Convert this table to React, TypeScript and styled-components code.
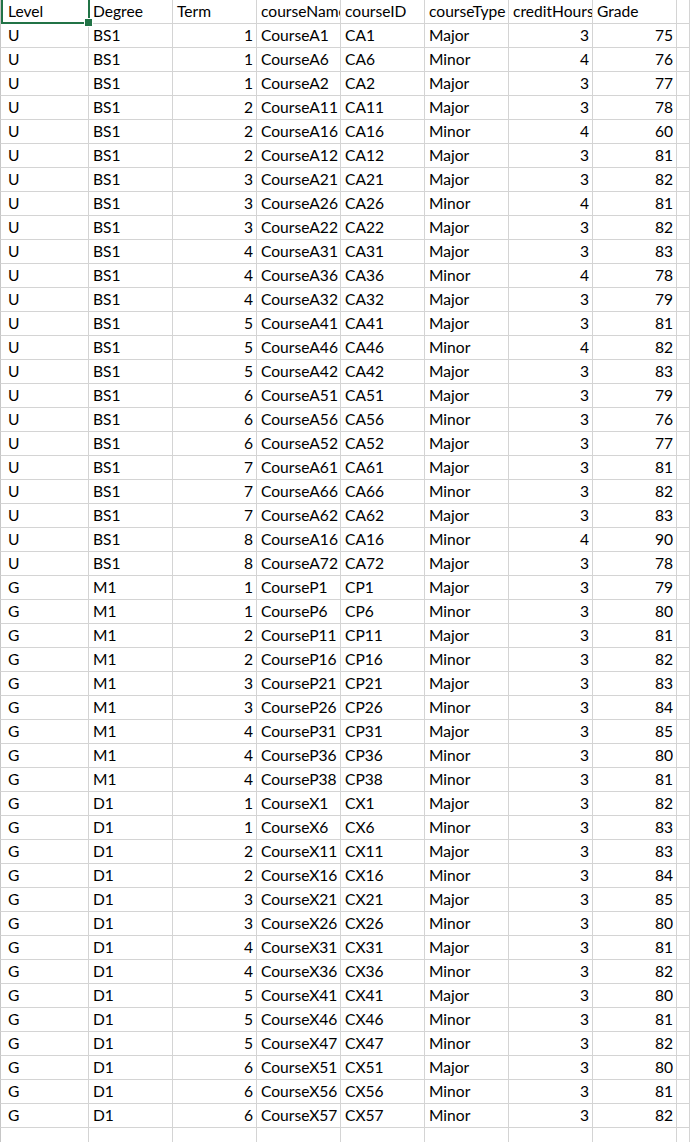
import React from 'react';
import styled, { createGlobalStyle } from 'styled-components';

const GlobalStyle = createGlobalStyle`
  html, body {
    margin: 0;
    padding: 0;
    background: #ffffff;
    overflow: hidden;
  }
`;

type Row = [string, string, number, string, string, string, number, number];

const headers = ['Level', 'Degree', 'Term', 'courseName', 'courseID', 'courseType', 'creditHours', 'Grade'];

const rows: Row[] = [
  ['U', 'BS1', 1, 'CourseA1', 'CA1', 'Major', 3, 75],
  ['U', 'BS1', 1, 'CourseA6', 'CA6', 'Minor', 4, 76],
  ['U', 'BS1', 1, 'CourseA2', 'CA2', 'Major', 3, 77],
  ['U', 'BS1', 2, 'CourseA11', 'CA11', 'Major', 3, 78],
  ['U', 'BS1', 2, 'CourseA16', 'CA16', 'Minor', 4, 60],
  ['U', 'BS1', 2, 'CourseA12', 'CA12', 'Major', 3, 81],
  ['U', 'BS1', 3, 'CourseA21', 'CA21', 'Major', 3, 82],
  ['U', 'BS1', 3, 'CourseA26', 'CA26', 'Minor', 4, 81],
  ['U', 'BS1', 3, 'CourseA22', 'CA22', 'Major', 3, 82],
  ['U', 'BS1', 4, 'CourseA31', 'CA31', 'Major', 3, 83],
  ['U', 'BS1', 4, 'CourseA36', 'CA36', 'Minor', 4, 78],
  ['U', 'BS1', 4, 'CourseA32', 'CA32', 'Major', 3, 79],
  ['U', 'BS1', 5, 'CourseA41', 'CA41', 'Major', 3, 81],
  ['U', 'BS1', 5, 'CourseA46', 'CA46', 'Minor', 4, 82],
  ['U', 'BS1', 5, 'CourseA42', 'CA42', 'Major', 3, 83],
  ['U', 'BS1', 6, 'CourseA51', 'CA51', 'Major', 3, 79],
  ['U', 'BS1', 6, 'CourseA56', 'CA56', 'Minor', 3, 76],
  ['U', 'BS1', 6, 'CourseA52', 'CA52', 'Major', 3, 77],
  ['U', 'BS1', 7, 'CourseA61', 'CA61', 'Major', 3, 81],
  ['U', 'BS1', 7, 'CourseA66', 'CA66', 'Minor', 3, 82],
  ['U', 'BS1', 7, 'CourseA62', 'CA62', 'Major', 3, 83],
  ['U', 'BS1', 8, 'CourseA16', 'CA16', 'Minor', 4, 90],
  ['U', 'BS1', 8, 'CourseA72', 'CA72', 'Major', 3, 78],
  ['G', 'M1', 1, 'CourseP1', 'CP1', 'Major', 3, 79],
  ['G', 'M1', 1, 'CourseP6', 'CP6', 'Minor', 3, 80],
  ['G', 'M1', 2, 'CourseP11', 'CP11', 'Major', 3, 81],
  ['G', 'M1', 2, 'CourseP16', 'CP16', 'Minor', 3, 82],
  ['G', 'M1', 3, 'CourseP21', 'CP21', 'Major', 3, 83],
  ['G', 'M1', 3, 'CourseP26', 'CP26', 'Minor', 3, 84],
  ['G', 'M1', 4, 'CourseP31', 'CP31', 'Major', 3, 85],
  ['G', 'M1', 4, 'CourseP36', 'CP36', 'Minor', 3, 80],
  ['G', 'M1', 4, 'CourseP38', 'CP38', 'Minor', 3, 81],
  ['G', 'D1', 1, 'CourseX1', 'CX1', 'Major', 3, 82],
  ['G', 'D1', 1, 'CourseX6', 'CX6', 'Minor', 3, 83],
  ['G', 'D1', 2, 'CourseX11', 'CX11', 'Major', 3, 83],
  ['G', 'D1', 2, 'CourseX16', 'CX16', 'Minor', 3, 84],
  ['G', 'D1', 3, 'CourseX21', 'CX21', 'Major', 3, 85],
  ['G', 'D1', 3, 'CourseX26', 'CX26', 'Minor', 3, 80],
  ['G', 'D1', 4, 'CourseX31', 'CX31', 'Major', 3, 81],
  ['G', 'D1', 4, 'CourseX36', 'CX36', 'Minor', 3, 82],
  ['G', 'D1', 5, 'CourseX41', 'CX41', 'Major', 3, 80],
  ['G', 'D1', 5, 'CourseX46', 'CX46', 'Minor', 3, 81],
  ['G', 'D1', 5, 'CourseX47', 'CX47', 'Minor', 3, 82],
  ['G', 'D1', 6, 'CourseX51', 'CX51', 'Major', 3, 80],
  ['G', 'D1', 6, 'CourseX56', 'CX56', 'Minor', 3, 81],
  ['G', 'D1', 6, 'CourseX57', 'CX57', 'Minor', 3, 82],
];

const gridColor = '#d4d4d4';
const excelGreen = '#217346';

const SheetArea = styled.div`
  position: relative;
  width: 690px;
`;

const Sheet = styled.div`
  display: grid;
  grid-template-columns: 89px repeat(7, 84px) 1fr;
  grid-auto-rows: 24px;
  width: 690px;
  font-family: Lato, 'Open Sans', 'Liberation Sans', sans-serif;
  font-size: 15.6px;
  color: #000000;
`;

const Cell = styled.div<{ $numeric?: boolean; $first?: boolean }>`
  box-sizing: border-box;
  border-right: 1px solid ${gridColor};
  border-bottom: 1px solid ${gridColor};
  border-left: ${({ $first }) => ($first ? '1px solid #c6c6c6' : 'none')};
  padding: ${({ $first, $numeric }) =>
    $first ? '0 3px 0 7px' : $numeric ? '0 3px 0 3px' : '0 3px 0 4px'};
  line-height: 23px;
  white-space: nowrap;
  overflow: hidden;
  text-align: ${({ $numeric }) => ($numeric ? 'right' : 'left')};
`;

const SelectionFrame = styled.div`
  position: absolute;
  left: 1px;
  top: 0;
  width: 89px;
  height: 24px;
  box-sizing: border-box;
  border-left: 2px solid ${excelGreen};
  border-right: 2px solid ${excelGreen};
  border-bottom: 2px solid ${excelGreen};
  pointer-events: none;
  z-index: 2;
`;

const FillHandle = styled.div`
  position: absolute;
  left: 84px;
  top: 18px;
  width: 7px;
  height: 7px;
  background: ${excelGreen};
  border: 1px solid #ffffff;
  z-index: 3;
`;

const numericCols = new Set([2, 6, 7]);

export default function App() {
  return (
    <>
      <GlobalStyle />
      <SheetArea>
        <Sheet>
          {headers.map((h, i) => (
            <Cell key={h} $first={i === 0}>
              {h}
            </Cell>
          ))}
          <Cell />
          {rows.map((row, r) => (
            <React.Fragment key={r}>
              {row.map((v, c) => (
                <Cell key={c} $first={c === 0} $numeric={numericCols.has(c)}>
                  {v}
                </Cell>
              ))}
              <Cell />
            </React.Fragment>
          ))}
          {Array.from({ length: 9 }).map((_, c) => (
            <Cell key={`e${c}`} $first={c === 0} />
          ))}
        </Sheet>
        <SelectionFrame />
        <FillHandle />
      </SheetArea>
    </>
  );
}
